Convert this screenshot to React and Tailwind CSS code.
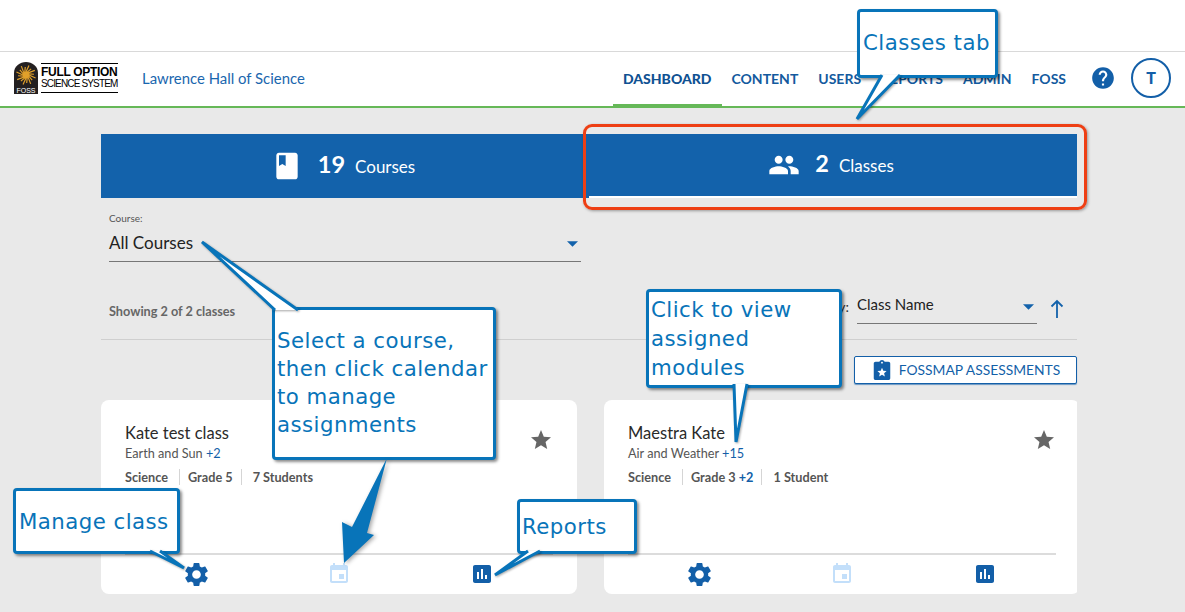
import React from "react";

const BLUE = "#1362ab";

function Icon({ d, className }) {
  return (
    <svg viewBox="0 0 24 24" fill="currentColor" className={className}>
      <path d={d} />
    </svg>
  );
}

const paths = {
  gear: "M19.14 12.94c.04-.3.06-.61.06-.94 0-.32-.02-.64-.07-.94l2.03-1.58c.18-.14.23-.41.12-.61l-1.92-3.32c-.12-.22-.37-.29-.59-.22l-2.39.96c-.5-.38-1.03-.7-1.62-.94l-.36-2.54c-.04-.24-.24-.41-.48-.41h-3.84c-.24 0-.43.17-.47.41l-.36 2.54c-.59.24-1.13.57-1.62.94l-2.39-.96c-.22-.08-.47 0-.59.22L2.74 8.87c-.12.21-.08.47.12.61l2.03 1.58c-.05.3-.09.63-.09.94s.02.64.07.94l-2.03 1.58c-.18.14-.23.41-.12.61l1.92 3.32c.12.22.37.29.59.22l2.39-.96c.5.38 1.03.7 1.62.94l.36 2.54c.05.24.24.41.48.41h3.84c.24 0 .44-.17.47-.41l.36-2.54c.59-.24 1.13-.56 1.62-.94l2.39.96c.22.08.47 0 .59-.22l1.92-3.32c.12-.22.07-.47-.12-.61l-2.01-1.58zM12 15.6c-1.98 0-3.6-1.62-3.6-3.6s1.62-3.6 3.6-3.6 3.6 1.62 3.6 3.6-1.62 3.6-3.6 3.6z",
  calendar: "M17 12h-5v5h5v-5zM16 1v2H8V1H6v2H5c-1.11 0-1.99.9-1.99 2L3 19c0 1.1.89 2 2 2h14c1.1 0 2-.9 2-2V5c0-1.1-.9-2-2-2h-1V1h-2zm3 18H5V8h14v11z",
  report: "M19 3H5c-1.1 0-2 .9-2 2v14c0 1.1.9 2 2 2h14c1.1 0 2-.9 2-2V5c0-1.1-.9-2-2-2zM9 17H7v-7h2v7zm4 0h-2V7h2v10zm4 0h-2v-4h2v4z",
  star: "M12 17.27L18.18 21l-1.64-7.03L22 9.24l-7.19-.61L12 2 9.19 8.63 2 9.24l5.46 4.73L5.82 21z",
  help: "M12 2C6.48 2 2 6.48 2 12s4.48 10 10 10 10-4.48 10-10S17.52 2 12 2zm1 17h-2v-2h2v2zm2.07-7.75l-.9.92C13.45 12.9 13 13.5 13 15h-2v-.5c0-1.1.45-2.1 1.17-2.83l1.24-1.26c.37-.36.59-.86.59-1.41 0-1.1-.9-2-2-2s-2 .9-2 2H8c0-2.21 1.79-4 4-4s4 1.79 4 4c0 .88-.36 1.68-.93 2.25z",
  book: "M18 2H6c-1.1 0-2 .9-2 2v16c0 1.1.9 2 2 2h12c1.1 0 2-.9 2-2V4c0-1.1-.9-2-2-2zM6 4h5v8l-2.5-1.5L6 12V4z",
  people: "M16 11c1.66 0 2.99-1.34 2.99-3S17.66 5 16 5c-1.66 0-3 1.34-3 3s1.34 3 3 3zm-8 0c1.66 0 2.99-1.34 2.99-3S9.66 5 8 5C6.34 5 5 6.34 5 8s1.34 3 3 3zm0 2c-2.33 0-7 1.17-7 3.5V19h14v-2.5c0-2.33-4.67-3.5-7-3.5zm8 0c-.29 0-.62.02-.97.05 1.16.84 1.97 1.97 1.97 3.45V19h6v-2.5c0-2.33-4.67-3.5-7-3.5z",
  clip: "M19 3h-4.18C14.4 1.84 13.3 1 12 1s-2.4.84-2.82 2H5c-1.1 0-2 .9-2 2v16c0 1.1.9 2 2 2h14c1.1 0 2-.9 2-2V5c0-1.1-.9-2-2-2zm-7 0c.55 0 1 .45 1 1s-.45 1-1 1-1-.45-1-1 .45-1 1-1zm3.1 16L12 17.1 8.9 19l.8-3.5L7 13.2l3.6-.3L12 9.6l1.4 3.3 3.6.3-2.7 2.3.8 3.5z",
};

function Caret({ className }) {
  return (
    <svg viewBox="0 0 12 6" fill={BLUE} className={className}>
      <path d="M0 0h12L6 6z" />
    </svg>
  );
}

function Logo() {
  const rays = Array.from({ length: 16 }, (_, i) => (i * Math.PI * 2) / 16);
  return (
    <div className="flex items-center gap-[3px] w-[105px]">
      <svg viewBox="0 0 24 32" className="w-[24px] h-[32px] shrink-0">
        <path d="M0 32V11C0 4 6 0 12 0s12 4 12 11v21z" fill="#231f20" />
        {rays.map((a, i) => (
          <line
            key={i}
            x1={12 + Math.cos(a) * 3}
            y1={13 + Math.sin(a) * 3}
            x2={12 + Math.cos(a + 0.3) * (i % 2 ? 8 : 10)}
            y2={13 + Math.sin(a + 0.3) * (i % 2 ? 8 : 10)}
            stroke="#e0a02a"
            strokeWidth="1.2"
          />
        ))}
        <circle cx="12" cy="13" r="3.4" fill="#e0a02a" />
        <text x="12" y="30.5" fontSize="7" fill="#fff" textAnchor="middle" fontFamily="Liberation Sans, sans-serif">
          FOSS
        </text>
      </svg>
      <div className="w-[77px] h-[30px] border-t border-b border-black font-['Liberation_Sans',sans-serif] text-black flex flex-col justify-center">
        <div className="text-[12px] leading-[12px] font-bold whitespace-nowrap tracking-[-0.3px]">FULL OPTION</div>
        <div className="text-[10px] leading-[11px] whitespace-nowrap tracking-[-0.85px]">SCIENCE SYSTEM</div>
      </div>
    </div>
  );
}

function Header() {
  const items = ["CONTENT", "USERS", "REPORTS", "ADMIN", "FOSS"];
  return (
    <header className="bg-white">
      <div className="h-[52px] border-b border-[#d9d9d9]" />
      <div className="h-[56px] border-b-2 border-[#66b858] flex items-stretch pl-[14px]">
        <div className="flex items-center -mt-[3px]">
          <Logo />
        </div>
        <div className="ml-[23px] flex items-center text-[14.9px] text-[#1a66ae] -mt-[2px]">Lawrence Hall of Science</div>
        <nav className="ml-auto flex items-stretch text-[14px] font-bold text-[#135a9e]">
          <a className="px-[10px] flex items-center border-b-4 border-[#66b858] font-black text-[#0f5192] -mb-[2px]">DASHBOARD</a>
          {items.map((t) => (
            <a key={t} className="px-[10px] flex items-center -mt-[2px]">{t}</a>
          ))}
        </nav>
        <div className="flex items-center ml-[14px] mr-[14px] gap-[15px] -mt-[2px]">
          <Icon d={paths.help} className="w-[26px] h-[26px] text-[#135fa8]" />
          <div className="w-[40px] h-[40px] rounded-full border-2 border-[#135fa8] flex items-center justify-center text-[16px] font-black text-[#135fa8]">T</div>
        </div>
      </div>
    </header>
  );
}

function Tab({ icon, count, label, active }) {
  return (
    <div className={active ? "flex-1 bg-[#1362ab] border-b-2 border-white flex items-center justify-center text-white pr-[4px]" : "flex-1 bg-[#1362ab] flex items-center justify-center text-white pr-[4px]"}>
      <Icon d={icon} className="w-[32px] h-[32px]" />
      <span className="ml-[15px] text-[23.5px] font-bold leading-none -mt-[3px]">{count}</span>
      <span className="ml-[10px] text-[17px] leading-none">{label}</span>
    </div>
  );
}

function Card({ title, course, more, grade, gradeMore, students, className }) {
  return (
    <div className={className}>
      <div className="flex justify-between pl-[24px] pr-[24px] pt-[23px] h-[153px]">
        <div>
          <div className="text-[16.5px] leading-[20px] text-[#2a2a2a]">{title}</div>
          <div className="text-[12.7px] leading-[16px] mt-[2px] text-[#555]">
            {course} <span className="text-[#135fa8]">{more}</span>
          </div>
          <div className="flex items-center text-[12.7px] font-bold text-[#555] mt-[8px] leading-[16px]">
            <span className="pr-[11px] border-r border-[#d5d5d5]">Science</span>
            <span className="pl-[8px] pr-[8px] border-r border-[#d5d5d5]">
              {grade} {gradeMore && <span className="text-[#135fa8]">{gradeMore}</span>}
            </span>
            <span className="pl-[11px]">{students}</span>
          </div>
        </div>
        <Icon d={paths.star} className="w-[24px] h-[24px] text-[#666] mt-[5px]" />
      </div>
      <div className="mx-[24px] border-t-2 border-[#dcdcdc] grid grid-cols-3 justify-items-center pt-[5px]">
        <Icon d={paths.gear} className="w-[29px] h-[29px] text-[#135fa8]" />
        <Icon d={paths.calendar} className="w-[24px] h-[24px] mt-[2px] text-[#c3dffa]" />
        <Icon d={paths.report} className="w-[24px] h-[24px] mt-[2px] text-[#135fa8]" />
      </div>
    </div>
  );
}

function Callout({ className, boxClass, tail, children }) {
  const pts = tail.map((p) => p.join(",")).join(" ");
  return (
    <div className={"absolute " + className}>
      <div className={"bg-white border-[3px] border-[#0874b9] rounded-[4px] shadow-[2px_2px_3px_rgba(0,0,0,0.45)] font-['DejaVu_Sans',sans-serif] text-[#0874b9] text-[21.3px] tracking-[0.45px] whitespace-nowrap " + boxClass}>
        {children}
      </div>
      <svg className="absolute left-0 top-0 w-px h-px overflow-visible [filter:drop-shadow(1px_1px_1px_rgba(0,0,0,0.35))]">
        <polygon points={pts} fill="#fff" />
        <polyline points={pts} fill="none" stroke="#0874b9" strokeWidth="3" />
      </svg>
    </div>
  );
}

export default function App() {
  return (
    <div className="relative w-[1185px] h-[612px] overflow-hidden bg-[#e9e9e9] font-['Lato',sans-serif]">
      <Header />

      <main className="ml-[101px] w-[976px]">
        <div className="flex h-[64px] mt-[26px]">
          <Tab icon={paths.book} count="19" label="Courses" />
          <Tab icon={paths.people} count="2" label="Classes" active />
        </div>

        <div className="ml-[8px] w-[472px] mt-[14px] border-b border-[#777] h-[50px]">
          <div className="text-[10px] leading-[12px] text-[#555]">Course:</div>
          <div className="flex items-center justify-between mt-[7px] pr-[3px]">
            <span className="text-[17px] leading-[24px] text-[#222]">All Courses</span>
            <Caret className="w-[11px] h-[6px] mt-[1px]" />
          </div>
        </div>

        <div className="flex justify-between h-[78px] border-b border-[#cfcfcf]">
          <div className="ml-[8px] mt-[41px] text-[12.7px] leading-[16px] font-bold text-[#666]">Showing 2 of 2 classes</div>
          <div className="flex items-start mt-[25px]">
            <span className="text-[14px] leading-[40px] mr-[8px] text-[#333]">Sort by:</span>
            <div className="w-[180px] h-[39px] border-b border-[#777] flex items-center justify-between pr-[3px] -mt-[2px]">
              <span className="text-[15px] text-[#222]">Class Name</span>
              <Caret className="w-[11px] h-[6px] mt-[6px]" />
            </div>
            <svg viewBox="0 0 14 20" fill="none" stroke={BLUE} strokeWidth="1.8" className="w-[14px] h-[20px] ml-[13px] mt-[12px] mr-[13px]">
              <path d="M7 19V2M1.5 7.5L7 2l5.5 5.5" />
            </svg>
          </div>
        </div>

        <div className="flex justify-end mt-[16px]">
          <div className="w-[223px] h-[28px] bg-white border border-[#135fa8] rounded-[2px] shadow-[0_1px_1px_rgba(19,95,168,0.6)] flex items-center justify-center gap-[6px] text-[13.85px] text-[#135fa8]">
            <Icon d={paths.clip} className="w-[22px] h-[22px]" />
            <span>FOSSMAP ASSESSMENTS</span>
          </div>
        </div>

        <div className="grid grid-cols-[476px_476px] gap-x-[27px] mt-[16px] overflow-x-clip">
          <Card className="bg-white rounded-[8px] h-[194px]" title="Kate test class" course="Earth and Sun" more="+2" grade="Grade 5" students="7 Students" />
          <Card className="bg-white rounded-[8px] h-[194px]" title="Maestra Kate" course="Air and Weather" more="+15" grade="Grade 3" gradeMore="+2" students="1 Student" />
        </div>
      </main>

      {/* annotations laid over the screenshot */}
      <div className="absolute left-[583px] top-[124px] w-[504px] h-[86px] border-[3px] border-[#ee3f14] rounded-[9px] shadow-[1px_1px_3px_rgba(0,0,0,0.35)]" />

      <Callout className="left-[857px] top-[9px]" boxClass="w-[141px] h-[69px] pl-[3px] pt-[17px] leading-[28px]" tail={[[25, 66], [0, 110], [43, 66]]}>
        Classes tab
      </Callout>

      <Callout className="left-[272px] top-[307px]" boxClass="w-[224px] h-[153px] pl-[2px] pt-[17px] leading-[28px]" tail={[[3, 3], [-70, -65], [26, 3]]}>
        Select a course,<br />then click calendar<br />to manage<br />assignments
      </Callout>

      <svg className="absolute left-[330px] top-[455px] w-[60px] h-[112px] [filter:drop-shadow(2px_1px_2px_rgba(0,0,0,0.35))]" viewBox="330 455 60 112">
        <polygon points="387,458 352,527 342,522 344,563 374,535 367,533" fill="#0874b9" />
      </svg>

      <Callout className="left-[646px] top-[289px]" boxClass="w-[196px] h-[99px] pl-[2px] pt-[3px] leading-[29px]" tail={[[88, 95], [90, 153], [101, 95]]}>
        Click to view<br />assigned<br />modules
      </Callout>

      <Callout className="left-[13px] top-[488px]" boxClass="w-[167px] h-[66px] pl-[3px] pt-[17px] leading-[28px]" tail={[[137, 63], [171, 80], [147, 63]]}>
        Manage class
      </Callout>

      <Callout className="left-[517px] top-[499px]" boxClass="w-[120px] h-[55px] pl-[2px] pt-[11px] leading-[28px]" tail={[[11, 52], [-22, 76], [23, 52]]}>
        Reports
      </Callout>
    </div>
  );
}
